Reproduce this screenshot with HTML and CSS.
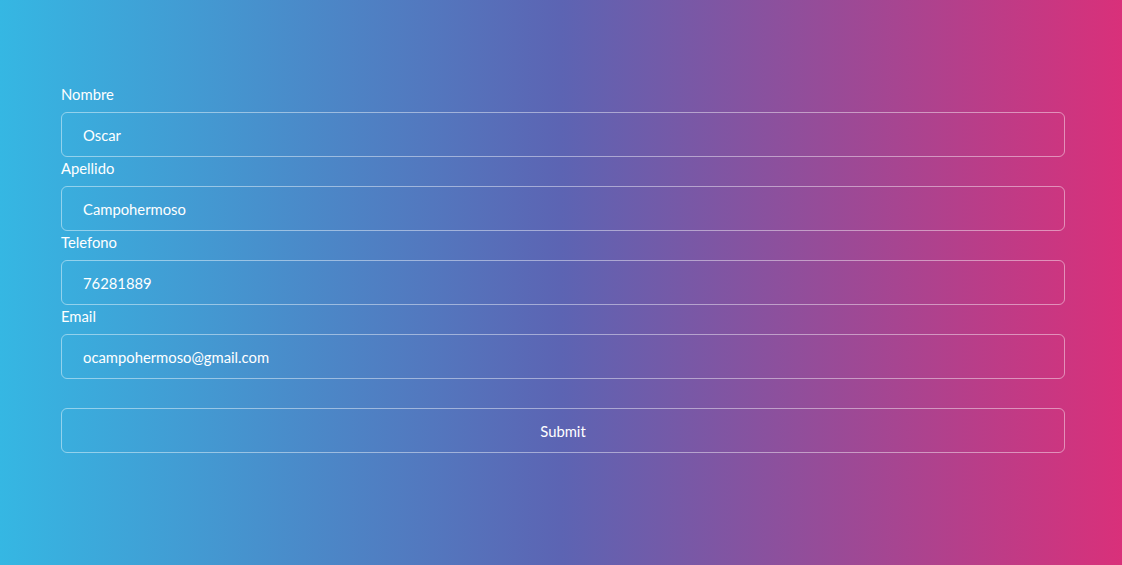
FILE: index.html
```html
<!DOCTYPE html>
<html lang="es">
<head>
<meta charset="utf-8">
<title>Formulario</title>
<link rel="stylesheet" href="styles.css">
</head>
<body>
<main class="page">
  <form class="form">
    <div class="field">
      <label class="label" for="nombre">Nombre</label>
      <input class="input" id="nombre" type="text" value="Oscar">
    </div>
    <div class="field">
      <label class="label" for="apellido">Apellido</label>
      <input class="input" id="apellido" type="text" value="Campohermoso">
    </div>
    <div class="field">
      <label class="label" for="telefono">Telefono</label>
      <input class="input" id="telefono" type="text" value="76281889">
    </div>
    <div class="field">
      <label class="label" for="email">Email</label>
      <input class="input" id="email" type="text" value="ocampohermoso@gmail.com">
    </div>
    <button class="submit" type="button">Submit</button>
  </form>
</main>
</body>
</html>
```
FILE: styles.css
```css
html, body {
  margin: 0;
  padding: 0;
  height: 100%;
}
body {
  background: linear-gradient(to right, #35b7e3 0%, #5c64b3 50%, #d9307a 100%);
  font-family: "Lato", "Open Sans", sans-serif;
  color: #ffffff;
}
.page {
  padding: 83px 57px 0 61px;
}
.form {
  display: flex;
  flex-direction: column;
  width: 1004px;
}
.field {
  display: flex;
  flex-direction: column;
}
.label {
  font-size: 14.8px;
  line-height: 19px;
  padding-top: 2px;
  margin-bottom: 8px;
  color: #ffffff;
}
.input, .submit {
  box-sizing: border-box;
  height: 45px;
  width: 100%;
  border: 1px solid rgba(255, 255, 255, 0.45);
  border-radius: 6px;
  background: transparent;
  color: #ffffff;
  font-family: "Lato", "Open Sans", sans-serif;
  font-size: 14.8px;
  outline: none;
}
.input {
  padding: 0 21px;
}
.submit {
  margin-top: 29px;
  text-align: center;
  cursor: pointer;
}
```
